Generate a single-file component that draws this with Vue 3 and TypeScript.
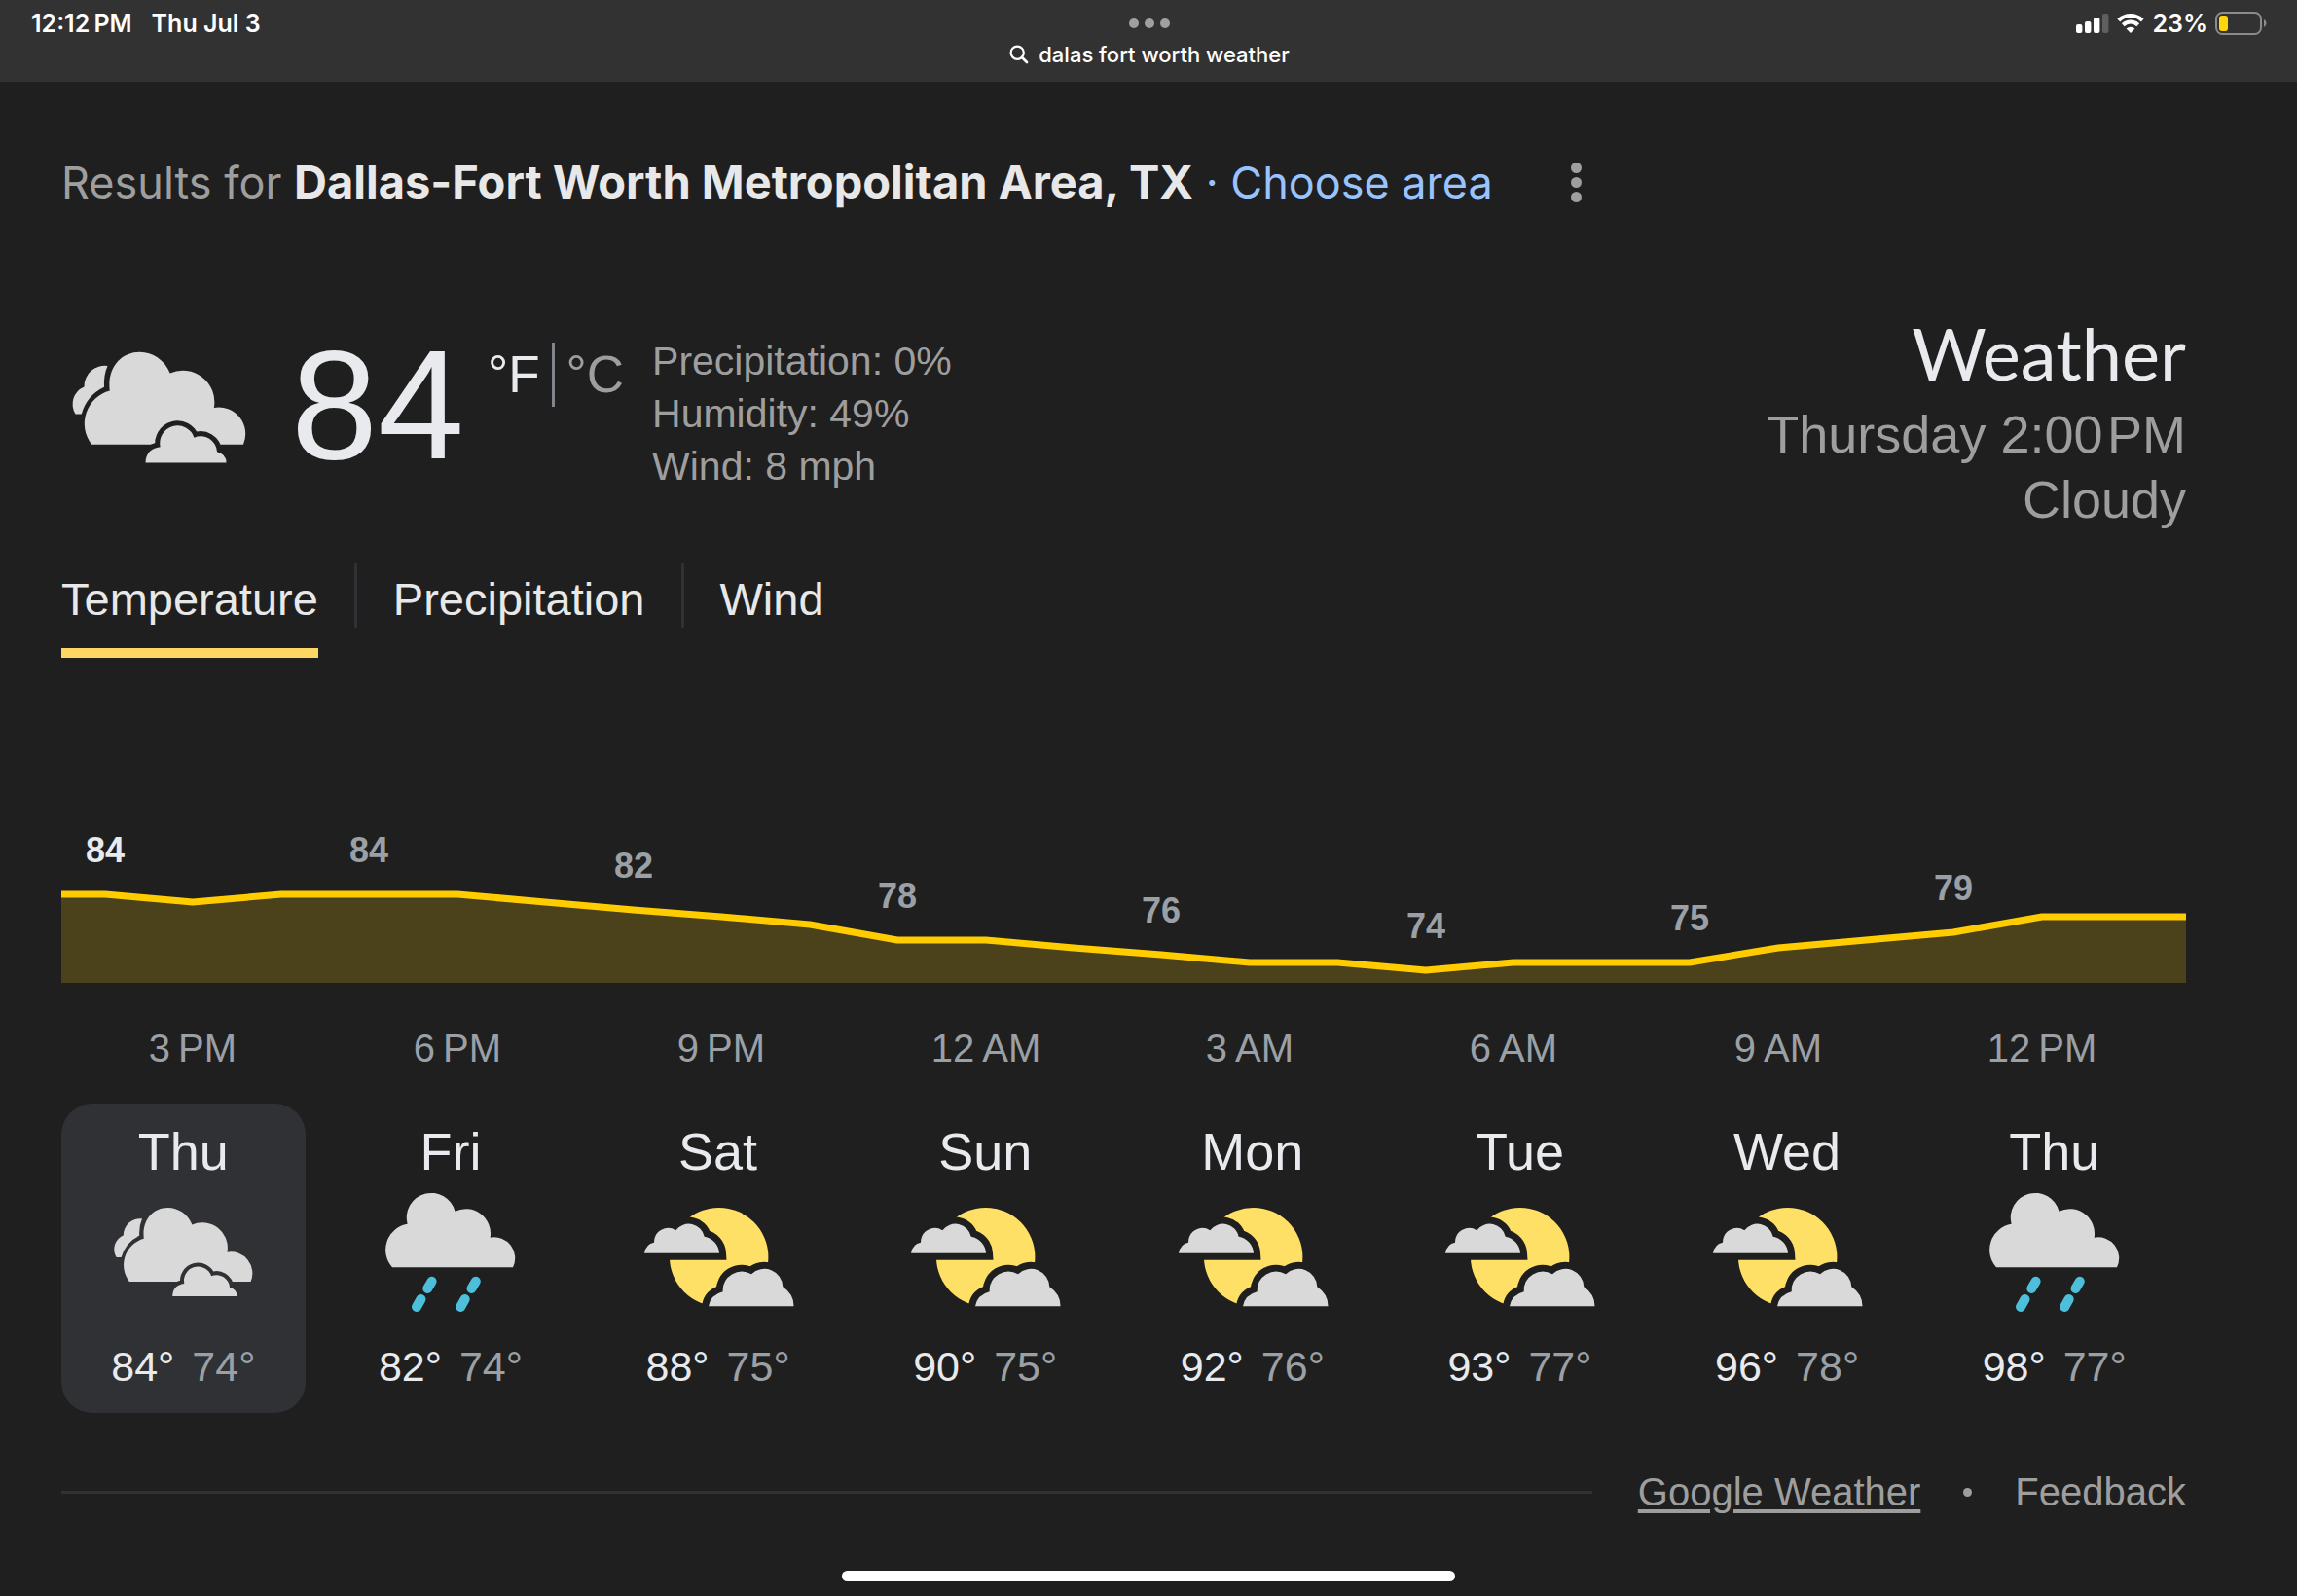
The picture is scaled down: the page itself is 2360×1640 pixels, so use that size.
<script setup lang="ts">
import { computed, ref } from 'vue'

type Icon = 'cloudy' | 'rain' | 'partly'

interface Day {
  name: string
  icon: Icon
  high: number
  low: number
}

const tabs: string[] = ['Temperature', 'Precipitation', 'Wind']
const activeTab = ref<string>('Temperature')
const activeDay = ref<number>(0)

// Hourly temperatures, starting at 2 PM
const hourly: number[] = [
  84, 83, 84, 84, 84, 83, 82, 81, 80, 78, 78, 77,
  76, 75, 75, 74, 75, 75, 75, 77, 78, 79, 81, 81,
]

const hours: string[] = ['3', '6', '9', '12', '3', '6', '9', '12']
const suffix = (i: number): string => (i < 3 || i === 7 ? 'PM' : 'AM')

const chart = { width: 2183, base: 164, first: 45, step: 90.45, degree: 7.8, top: 73, max: 84 }
const px = (i: number): number => Math.round(chart.first + i * chart.step)
const py = (t: number): number => Math.round(chart.top + (chart.max - t) * chart.degree)

const linePoints = computed<string>(() => {
  const mid = hourly.map((t, i) => `${px(i)},${py(t)}`)
  const start = `0,${py(hourly[0])}`
  const end = `${chart.width},${py(hourly[hourly.length - 1])}`
  return [start, ...mid, end].join(' ')
})
const areaPoints = computed<string>(
  () => `0,${chart.base} ${linePoints.value} ${chart.width},${chart.base}`,
)
const labels = hourly
  .map((t, i) => ({ t, x: px(i), y: py(t) - 33, first: i === 0, i }))
  .filter((p) => p.i % 3 === 0)

const days: Day[] = [
  { name: 'Thu', icon: 'cloudy', high: 84, low: 74 },
  { name: 'Fri', icon: 'rain', high: 82, low: 74 },
  { name: 'Sat', icon: 'partly', high: 88, low: 75 },
  { name: 'Sun', icon: 'partly', high: 90, low: 75 },
  { name: 'Mon', icon: 'partly', high: 92, low: 76 },
  { name: 'Tue', icon: 'partly', high: 93, low: 77 },
  { name: 'Wed', icon: 'partly', high: 96, low: 78 },
  { name: 'Thu', icon: 'rain', high: 98, low: 77 },
]
</script>

<template>
  <div class="screen">
    <svg class="defs" aria-hidden="true">
      <symbol id="wx-cloudy" viewBox="0 0 160 128">
        <path class="cloud" d="M11.6 70 A15.5 15.5 0 0 1 18.8 47.5 A17 17 0 0 1 38 30.3 Q34.6 38 35.2 47.8 Q21 54.5 16.6 70 Z" />
        <path class="cloud" d="M24.9 95 A28 28 0 0 1 39.8 50.8 C37.5 32 49 19 64.5 19 C75 19 85 25.5 89.4 36.4 A26 26 0 0 1 125.5 64.7 A22 22 0 0 1 149.6 95 Z" />
        <path class="cloud gap-narrow" d="M69.2 110 Q69.5 98.5 81.3 97 A14.5 14.5 0 0 1 109.2 89.3 A13.5 13.5 0 0 1 128 101 Q135.6 103 135.6 110 Z" />
      </symbol>
      <symbol id="wx-rain" viewBox="0 0 160 128">
        <path class="cloud" d="M20 80.3 A27 27 0 0 1 35.6 35.7 A25 25 0 0 1 84.5 22.7 A25.5 25.5 0 0 1 120.7 49.7 A21.5 21.5 0 0 1 144 80.3 Z" />
        <path class="drop" d="M60.6 94.8 L56.3 102 M49.5 113 L45 121 M105.8 94.8 L101.5 102 M94.7 113 L90.2 121" />
      </symbol>
      <symbol id="wx-partly" viewBox="0 0 160 128">
        <circle class="sun" cx="80.7" cy="69.7" r="50.7" />
        <path class="cloud gap" d="M4 65.7 Q5.5 56.5 14 54.7 A14.5 14.5 0 0 1 36.3 42.3 A16.5 16.5 0 0 1 65.7 48.7 A18.5 18.5 0 0 1 81 65.7 Z" />
        <path class="cloud gap" d="M70 120.3 Q72 108.5 84.7 105.3 A19.5 19.5 0 0 1 114 87.3 A19 19 0 0 1 146.3 100.3 Q157.8 108 157.5 120.3 Z" />
      </symbol>
    </svg>

    <header class="status">
      <div class="clock">
        <span>12:12&#8201;PM</span>
        <span>Thu Jul 3</span>
      </div>
      <div class="address">
        <button class="dots" type="button" aria-label="Multitasking">
          <i></i><i></i><i></i>
        </button>
        <button class="query" type="button">
          <svg width="20" height="20" viewBox="0 0 20 20" aria-hidden="true">
            <circle cx="8.2" cy="8.2" r="6.6" fill="none" stroke="#fff" stroke-width="2.2" />
            <path d="M13 13 L18 18" stroke="#fff" stroke-width="2.8" stroke-linecap="round" />
          </svg>
          <span>dalas fort worth weather</span>
        </button>
      </div>
      <div class="indicators">
        <svg width="34" height="20" viewBox="0 0 34 20" aria-hidden="true">
          <rect x="0" y="11" width="6.4" height="9" rx="2" fill="#fff" />
          <rect x="9" y="8" width="6.4" height="12" rx="2" fill="#fff" />
          <rect x="18" y="4" width="6.4" height="16" rx="2" fill="#fff" />
          <rect x="27" y="0" width="6.4" height="20" rx="2" fill="#5f5f5f" />
        </svg>
        <svg class="wifi" width="28" height="20" viewBox="0 0 28 20" aria-hidden="true">
          <path d="M1.8 7 A17.5 17.5 0 0 1 26.2 7" />
          <path d="M6.3 11.7 A11 11 0 0 1 21.7 11.7" />
          <path class="tip" d="M14 20 L9.6 15.6 A6.4 6.4 0 0 1 18.4 15.6 Z" />
        </svg>
        <span>23%</span>
        <svg width="54" height="24" viewBox="0 0 54 24" aria-hidden="true">
          <rect x="1" y="1" width="46" height="22" rx="6.5" fill="none" stroke="#8b8b8b" stroke-width="2" />
          <rect x="4" y="4" width="9" height="16" rx="3" fill="#ffd60a" />
          <path d="M50 8 A4.4 4.4 0 0 1 50 16 Z" fill="#8b8b8b" />
        </svg>
      </div>
    </header>

    <main class="card">
      <div class="results">
        <p>
          Results for <strong>Dallas-Fort Worth Metropolitan Area, TX</strong>
          <a href="#area"> · Choose area</a>
        </p>
        <button class="more" type="button" aria-label="More options">
          <i></i><i></i><i></i>
        </button>
      </div>

      <section class="summary">
        <svg class="now-icon" aria-label="Cloudy"><use href="#wx-cloudy" /></svg>
        <span class="temp">84</span>
        <div class="units">
          <span class="unit on">°F</span>
          <a class="unit" href="#celsius">°C</a>
        </div>
        <ul class="details">
          <li>Precipitation: 0%</li>
          <li>Humidity: 49%</li>
          <li>Wind: 8 mph</li>
        </ul>
        <div class="place">
          <h1>Weather</h1>
          <p>Thursday 2:00&#8202;PM</p>
          <p>Cloudy</p>
        </div>
      </section>

      <nav class="tabs">
        <template v-for="(tab, i) in tabs" :key="tab">
          <span v-if="i > 0" class="bar"></span>
          <button type="button" class="tab" :class="{ on: tab === activeTab }" @click="activeTab = tab">
            {{ tab }}
          </button>
        </template>
      </nav>

      <svg class="chart" viewBox="0 0 2183 258" role="img" aria-label="Hourly temperature">
        <polygon :points="areaPoints" fill="#4b411a" />
        <polyline :points="linePoints" fill="none" stroke="#fc0" stroke-width="7" stroke-linejoin="round" />
        <text
          v-for="l in labels"
          :key="l.x"
          class="value"
          :class="{ first: l.first }"
          :x="l.x"
          :y="l.y"
        >{{ l.t }}</text>
        <text v-for="(h, i) in hours" :key="i" class="hour" :x="px(1 + i * 3)" y="245">{{ h }}&#8201;{{ suffix(i) }}</text>
      </svg>

      <section class="days">
        <button
          v-for="(d, i) in days"
          :key="i"
          type="button"
          class="day"
          :class="{ on: i === activeDay }"
          @click="activeDay = i"
        >
          <span class="name">{{ d.name }}</span>
          <svg class="day-icon" aria-hidden="true"><use :href="'#wx-' + d.icon" /></svg>
          <span class="range">
            <span>{{ d.high }}°</span>
            <span class="low">{{ d.low }}°</span>
          </span>
        </button>
      </section>

      <footer class="foot">
        <hr />
        <a class="source" href="#google-weather">Google Weather</a>
        <i class="bullet"></i>
        <a href="#feedback">Feedback</a>
      </footer>
    </main>

    <div class="home"></div>
  </div>
</template>

<style>
body {
  background: #1f1f1f;
}
</style>

<style scoped>
.screen {
  --surface: #1f1f1f;
  display: flex;
  flex-direction: column;
  min-height: 100vh;
  background: #1f1f1f;
  color: #e8e8e8;
  font-family: 'Liberation Sans', Arial, sans-serif;
}
.screen * {
  box-sizing: border-box;
}
button {
  padding: 0;
  border: 0;
  background: none;
  color: inherit;
  font: inherit;
  cursor: pointer;
}
a {
  color: inherit;
  text-decoration: none;
}
p, h1, ul {
  margin: 0;
  padding: 0;
  list-style: none;
}
.defs {
  position: absolute;
  width: 0;
  height: 0;
}
.cloud {
  fill: #d9d9d9;
}
.gap {
  stroke: var(--surface);
  stroke-width: 14px;
  paint-order: stroke;
}
.gap-narrow {
  stroke: var(--surface);
  stroke-width: 8px;
  paint-order: stroke;
}
.sun {
  fill: #ffe066;
}
.drop {
  fill: none;
  stroke: #4dbfdb;
  stroke-width: 10px;
  stroke-linecap: round;
}

.status {
  display: grid;
  grid-template-columns: 1fr auto 1fr;
  height: 84px;
  padding: 0 30px 0 32px;
  background: #323232;
  color: #fff;
  font-family: Inter, sans-serif;
  font-size: 25px;
  font-weight: 600;
  line-height: 48px;
}
.clock {
  display: flex;
  gap: 20px;
}
.address {
  display: flex;
  flex-direction: column;
  align-items: center;
  gap: 12px;
  padding-top: 19px;
}
.dots {
  display: flex;
  gap: 6px;
}
.dots i {
  width: 10px;
  height: 10px;
  border-radius: 50%;
  background: #a0a0a0;
}
.query {
  display: flex;
  align-items: center;
  gap: 10px;
  font-size: 22px;
  font-weight: 500;
  line-height: 30px;
}
.indicators {
  display: flex;
  align-items: center;
  justify-content: flex-end;
  gap: 8px;
  height: 48px;
}
.wifi path {
  fill: none;
  stroke: #fff;
  stroke-width: 4px;
}
.wifi .tip {
  fill: #fff;
  stroke: none;
}

.card {
  padding: 73px 114px 0 63px;
}
.results {
  display: flex;
  align-items: center;
  gap: 80px;
  height: 60px;
  color: #9e9e9e;
  font-family: Inter, sans-serif;
  font-size: 45px;
  line-height: 60px;
}
.results strong {
  color: #e8e8e8;
  font-size: 47px;
  font-weight: 650;
}
.results a {
  color: #99c3ff;
}
.more {
  display: flex;
  flex-direction: column;
  gap: 4px;
}
.more i {
  width: 11px;
  height: 11px;
  border-radius: 50%;
  background: #9e9e9e;
}

.summary {
  display: flex;
  align-items: flex-start;
  margin-top: 105px;
}
.now-icon {
  width: 200px;
  height: 160px;
  margin-top: 16px;
}
.temp {
  margin-top: 14px;
  margin-left: 36px;
  color: #e8eaed;
  font-size: 160px;
  line-height: 160px;
}
.units {
  display: flex;
  margin: 30px 0 0 24px;
  font-size: 53px;
  line-height: 66px;
}
.unit {
  color: #9e9e9e;
}
.unit.on {
  padding-right: 12px;
  margin-right: 12px;
  border-right: 3px solid #80868b;
  color: #e8eaed;
}
.details {
  margin: 22px 0 0 29px;
  color: #9e9e9e;
  font-size: 41px;
  line-height: 54px;
}
.place {
  margin-left: auto;
  color: #9e9e9e;
  font-size: 54px;
  line-height: 67px;
  text-align: right;
}
.place h1 {
  margin-bottom: 9px;
  color: #e8eaed;
  font-family: Lato, sans-serif;
  font-size: 74px;
  font-weight: 400;
  line-height: 82px;
}

.tabs {
  display: flex;
  align-items: flex-start;
  gap: 37px;
  margin-top: 32px;
}
.tab {
  padding-bottom: 13px;
  border-bottom: 10px solid transparent;
  font-size: 47px;
  line-height: 74px;
}
.tab.on {
  border-color: #fdd663;
}
.bar {
  width: 3px;
  height: 66px;
  background: #303134;
}

.chart {
  display: block;
  width: 100%;
  margin-top: 170px;
}
.chart text {
  fill: #9aa0a6;
  text-anchor: middle;
}
.chart .value {
  font-size: 36px;
  font-weight: 700;
}
.chart .first {
  fill: #e8eaed;
}
.chart .hour {
  font-size: 40px;
}

.days {
  display: flex;
  gap: 24px;
  margin-top: 30px;
  padding-right: 10px;
}
.day {
  display: flex;
  flex: 1;
  flex-direction: column;
  align-items: center;
  padding: 19px 0 23px;
  border-radius: 32px;
  color: #e8eaed;
}
.day.on {
  --surface: #303134;
  background: #303134;
}
.name {
  font-size: 54px;
  line-height: 60px;
}
.day-icon {
  width: 160px;
  height: 128px;
  margin: 9px 0 29px;
}
.range {
  display: flex;
  gap: 18px;
  font-size: 43px;
  line-height: 50px;
}
.low {
  color: #9aa0a6;
}

.foot {
  display: flex;
  align-items: center;
  margin-top: 54px;
  color: #9e9e9e;
  font-size: 40px;
  line-height: 54px;
}
.foot hr {
  flex: 1;
  height: 3px;
  margin: 0 47px 0 0;
  border: 0;
  background: #303134;
}
.source {
  text-decoration: underline;
  text-decoration-thickness: 4px;
  text-underline-offset: 4px;
}
.bullet {
  width: 9px;
  height: 9px;
  margin: 0 44px;
  border-radius: 50%;
  background: #9e9e9e;
}

.home {
  width: 630px;
  height: 11px;
  margin: auto auto 15px;
  border-radius: 6px;
  background: #fff;
}
</style>
